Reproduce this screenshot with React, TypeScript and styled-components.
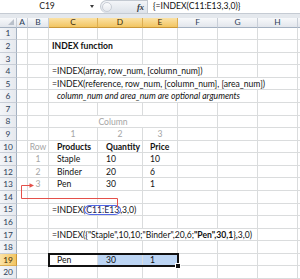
import React from "react";
import styled, { createGlobalStyle } from "styled-components";

const GlobalStyle = createGlobalStyle`
  html, body {
    margin: 0;
    padding: 0;
    background: #ffffff;
  }
  body {
    width: 300px;
    height: 279px;
    overflow: hidden;
    font-family: Lato, "Liberation Sans", sans-serif;
  }
`;

// row header, A, B, C, D, E, F, G, H, I
const COLUMN_WIDTHS = [17, 11, 21, 49, 45, 35, 40, 40, 40, 40];
const GRID_TEMPLATE = COLUMN_WIDTHS.map((w) => `${w}px`).join(" ");
// the I column only peeks in at the right edge, its letter is off-screen
const COLUMN_LETTERS = ["A", "B", "C", "D", "E", "F", "G", "H", ""];
const ROW_HEIGHT = 12.58;
const ROW_COUNT = 20;
const ACTIVE_COLUMNS = [3, 4, 5];
const ACTIVE_ROW = 19;

const Window = styled.div`
  position: relative;
  width: 300px;
  height: 279px;
  overflow: hidden;
  display: flex;
  flex-direction: column;
  background: #ffffff;
`;

const FormulaBar = styled.div`
  display: flex;
  height: 14px;
  box-sizing: border-box;
  border-bottom: 1px solid #c5cbd3;
  background: #ffffff;
`;

const NameBox = styled.div`
  width: 97px;
  display: flex;
  align-items: center;
  padding-left: 4px;
  box-sizing: border-box;
  font-size: 8.6px;
  color: #1b1b1b;
`;

const NameText = styled.span`
  flex: 1;
  text-align: center;
`;

const DropArrow = styled.span`
  width: 0;
  height: 0;
  margin-right: 3px;
  border-left: 2.5px solid transparent;
  border-right: 2.5px solid transparent;
  border-top: 3px solid #3c3c3c;
`;

const FxPill = styled.div`
  width: 47px;
  margin-left: 3px;
  display: flex;
  align-items: center;
  box-sizing: border-box;
  padding-right: 3px;
  border: 1px solid #c3c9d1;
  border-right: none;
  border-bottom: none;
  border-radius: 7px 0 0 7px;
  background: linear-gradient(#f3f5f8, #dde2e9);
`;

const Knob = styled.span`
  width: 10px;
  height: 10px;
  margin-left: 1px;
  border-radius: 50%;
  box-sizing: border-box;
  border: 1px solid #c9ced6;
  background: linear-gradient(#fbfcfd, #e6e9ee);
`;

const FxLabel = styled.span`
  margin-left: auto;
  font-family: "Liberation Serif", serif;
  font-style: italic;
  font-weight: bold;
  font-size: 8.5px;
  color: #333a44;
`;

const FormulaInput = styled.div`
  flex: 1;
  display: flex;
  align-items: center;
  padding-left: 5px;
  border-left: 1px solid #c5cbd3;
  font-size: 8.6px;
  color: #111111;
  white-space: nowrap;
`;

const BarGap = styled.div`
  height: 4px;
  background: #e4e8ed;
`;

const HeaderRow = styled.div`
  display: grid;
  grid-template-columns: ${GRID_TEMPLATE};
  height: 9.7px;
`;

const HeaderCell = styled.div<{ $active?: boolean }>`
  display: flex;
  align-items: center;
  justify-content: center;
  box-sizing: border-box;
  overflow: hidden;
  font-size: 8.4px;
  color: ${(p) => (p.$active ? "#3a2a08" : "#2d4159")};
  background: ${(p) =>
    p.$active
      ? "linear-gradient(#fbe2a6, #f2c561)"
      : "linear-gradient(#f8f9fb, #e2e6ec)"};
  border-right: 1px solid ${(p) => (p.$active ? "#dcae52" : "#c8ced7")};
  border-bottom: 1px solid ${(p) => (p.$active ? "#c99739" : "#a3b0c0")};
`;

const Corner = styled(HeaderCell)`
  align-items: flex-end;
  justify-content: flex-end;
  padding: 0 2px 2px 0;
`;

const CornerTriangle = styled.span`
  width: 0;
  height: 0;
  border-left: 6px solid transparent;
  border-bottom: 6px solid #b9c0ca;
`;

const SheetRow = styled.div`
  display: grid;
  grid-template-columns: ${GRID_TEMPLATE};
  height: ${ROW_HEIGHT}px;
`;

const RowHeader = styled(HeaderCell)`
  grid-row: 1;
  grid-column: 1;
  border-right-color: ${(p) => (p.$active ? "#c99739" : "#a3b0c0")};
  border-bottom-color: ${(p) => (p.$active ? "#dcae52" : "#c8ced7")};
  background: ${(p) =>
    p.$active
      ? "linear-gradient(90deg, #fbe2a6, #f2c561)"
      : "linear-gradient(90deg, #f3f5f8, #e6e9ee)"};
`;

type Tone = "plain" | "bold" | "muted" | "italic";

const GridCell = styled.div<{
  $col: number;
  $span: number;
  $tone: Tone;
  $align: "left" | "center";
  $indent: number;
  $fill?: boolean;
}>`
  grid-row: 1;
  grid-column: ${(p) => p.$col + 1} / span ${(p) => p.$span};
  box-sizing: border-box;
  overflow: hidden;
  white-space: nowrap;
  padding-left: ${(p) => p.$indent}px;
  text-align: ${(p) => p.$align};
  font-size: 8.6px;
  line-height: ${ROW_HEIGHT}px;
  font-weight: ${(p) => (p.$tone === "bold" ? 700 : 400)};
  font-style: ${(p) => (p.$tone === "italic" ? "italic" : "normal")};
  color: ${(p) => (p.$tone === "muted" ? "#a5a5a5" : "#111111")};
  background: ${(p) => (p.$fill ? "#bcd5f4" : "#ffffff")};
  border-right: 1px solid #dadcdd;
  border-bottom: 1px solid #dadcdd;
`;

const SelectionFrame = styled.div`
  grid-row: 1;
  grid-column: 4 / span 3;
  position: relative;
  z-index: 2;
  margin: -1px;
  border: 2px solid #111111;
  pointer-events: none;
`;

const FillHandle = styled.span`
  position: absolute;
  right: -4px;
  bottom: -4px;
  width: 4px;
  height: 4px;
  background: #111111;
  border: 1px solid #ffffff;
`;

const RefMark = styled.span`
  display: inline-block;
  padding: 0 1px;
  margin: 0 -1px;
  line-height: 8px;
  border: 1px solid #5368e6;
  border-radius: 6px / 5px;
  color: #1c2452;
`;

const Strong = styled.b`
  font-weight: 700;
`;

const Annotation = styled.svg`
  position: absolute;
  top: 0;
  left: 0;
  pointer-events: none;
  z-index: 3;
`;

type CellSpec = {
  col: number;
  span?: number;
  text: React.ReactNode;
  tone?: Tone;
  align?: "left" | "center";
  indent?: number;
  fill?: boolean;
};

const TABLE = 8;

const ROWS: Record<number, CellSpec[]> = {
  2: [{ col: 3, span: 2, text: "INDEX function", tone: "bold" }],
  4: [{ col: 3, span: 4, text: "=INDEX(array, row_num, [column_num])" }],
  5: [
    {
      col: 3,
      span: 6,
      text: "=INDEX(reference, row_num, [column_num], [area_num])",
    },
  ],
  6: [
    {
      col: 3,
      span: 5,
      text: "column_num and area_num are optional arguments",
      tone: "italic",
      indent: TABLE,
    },
  ],
  8: [{ col: 3, span: 3, text: "Column", tone: "muted", align: "center" }],
  9: [
    { col: 3, text: "1", tone: "muted", align: "center" },
    { col: 4, text: "2", tone: "muted", align: "center" },
    { col: 5, text: "3", tone: "muted", align: "center" },
  ],
  10: [
    { col: 2, text: "Row", tone: "muted", align: "center" },
    { col: 3, text: "Products", tone: "bold", indent: TABLE },
    { col: 4, text: "Quantity", tone: "bold", indent: TABLE },
    { col: 5, text: "Price", tone: "bold", indent: 7 },
  ],
  11: [
    { col: 2, text: "1", tone: "muted", align: "center" },
    { col: 3, text: "Staple", indent: TABLE },
    { col: 4, text: "10", indent: TABLE },
    { col: 5, text: "10", indent: 7 },
  ],
  12: [
    { col: 2, text: "2", tone: "muted", align: "center" },
    { col: 3, text: "Binder", indent: TABLE },
    { col: 4, text: "20", indent: TABLE },
    { col: 5, text: "6", indent: 7 },
  ],
  13: [
    { col: 2, text: "3", tone: "muted", align: "center" },
    { col: 3, text: "Pen", indent: TABLE },
    { col: 4, text: "30", indent: TABLE },
    { col: 5, text: "1", indent: 7 },
  ],
  15: [
    {
      col: 3,
      span: 2,
      text: (
        <>
          =INDEX(<RefMark>C11:E13</RefMark>,3,0)
        </>
      ),
    },
  ],
  17: [
    {
      col: 3,
      span: 5,
      text: (
        <>
          =INDEX({"{"}"Staple",10,10;"Binder",20,6;
          <Strong>"Pen",30,1</Strong>
          {"}"},3,0)
        </>
      ),
    },
  ],
  19: [
    { col: 3, text: "Pen", indent: TABLE },
    { col: 4, text: "30", indent: TABLE, fill: true },
    { col: 5, text: "1", indent: 7, fill: true },
  ],
};

function buildCells(row: number) {
  const specs = ROWS[row] ?? [];
  const cells: React.ReactNode[] = [];
  let col = 1;
  while (col < COLUMN_WIDTHS.length) {
    const spec = specs.find((s) => s.col === col);
    const span = spec?.span ?? 1;
    cells.push(
      <GridCell
        key={col}
        $col={col}
        $span={span}
        $tone={spec?.tone ?? "plain"}
        $align={spec?.align ?? "left"}
        $indent={spec?.align === "center" ? 0 : spec?.indent ?? 3}
        $fill={spec?.fill}
      >
        {spec?.text}
      </GridCell>,
    );
    col += span;
  }
  return cells;
}

export default function App() {
  const rows = Array.from({ length: ROW_COUNT }, (_, i) => i + 1);

  return (
    <Window>
      <GlobalStyle />
      <FormulaBar>
        <NameBox>
          <NameText>C19</NameText>
          <DropArrow />
        </NameBox>
        <FxPill>
          <Knob />
          <FxLabel>fx</FxLabel>
        </FxPill>
        <FormulaInput>{"{=INDEX(C11:E13,3,0)}"}</FormulaInput>
      </FormulaBar>
      <BarGap />
      <HeaderRow>
        <Corner>
          <CornerTriangle />
        </Corner>
        {COLUMN_LETTERS.map((letter, i) => (
          <HeaderCell key={i} $active={ACTIVE_COLUMNS.includes(i + 1)}>
            {letter}
          </HeaderCell>
        ))}
      </HeaderRow>
      {rows.map((row) => (
        <SheetRow key={row}>
          <RowHeader $active={row === ACTIVE_ROW}>{row}</RowHeader>
          {buildCells(row)}
          {row === ACTIVE_ROW && (
            <SelectionFrame>
              <FillHandle />
            </SelectionFrame>
          )}
        </SheetRow>
      ))}
      <Annotation width={300} height={279} viewBox="0 0 300 279">
        <path
          d="M117.5 207 V198.5 H21.5 V185.5 H30"
          fill="none"
          stroke="#e4504a"
          strokeWidth={1}
        />
        <polygon points="29.5,183.3 34,185.5 29.5,187.7" fill="#e4504a" />
      </Annotation>
    </Window>
  );
}
